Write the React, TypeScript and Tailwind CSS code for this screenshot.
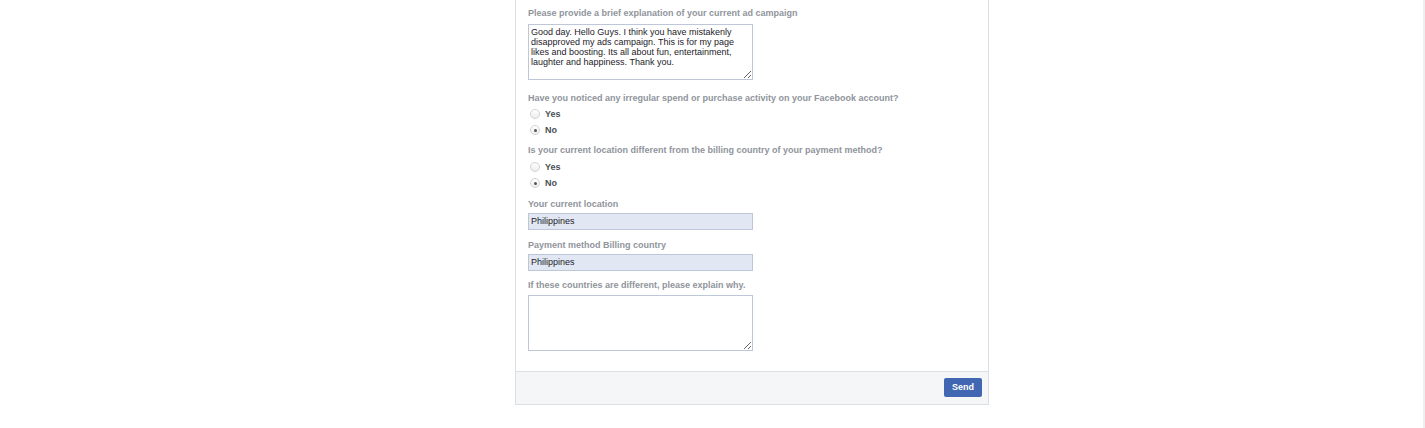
import React from 'react'

// Appeal form: ad campaign review questions
const font = { fontFamily: '"Liberation Sans", Arial, Helvetica, sans-serif' }

const campaignText =
  'Good day. Hello Guys. I think you have mistakenly\ndisapproved my ads campaign. This is for my page\nlikes and boosting. Its all about fun, entertainment,\nlaughter and happiness. Thank you.'

function Label({ children, className = '' }: { children: React.ReactNode; className?: string }) {
  return <div className={`text-[9px] leading-[11px] font-bold text-[#90949c] ${className}`}>{children}</div>
}

function Radio({ label, checked }: { label: string; checked?: boolean }) {
  return (
    <div className="flex items-center h-[16px] pl-[2px] gap-[5px]">
      <span className="flex items-center justify-center w-[10px] h-[10px] rounded-full border border-[#d3d3d3] bg-gradient-to-b from-white to-[#ededed]">
        {checked && <span className="w-[3px] h-[3px] rounded-full bg-[#555]" />}
      </span>
      <span className="text-[9px] leading-[11px] font-bold text-[#4b4f56]">{label}</span>
    </div>
  )
}

function TextBox({ value, className = '' }: { value: string; className?: string }) {
  return (
    <textarea
      readOnly
      defaultValue={value}
      className={`block w-[225px] h-[56px] border border-[#bdc7d8] bg-white px-[2px] pt-[2px] text-[9px] leading-[10px] text-[#1d2129] outline-none resize ${className}`}
      style={font}
    />
  )
}

function Field({ value, className = '' }: { value: string; className?: string }) {
  return (
    <div className={`w-[225px] h-[17px] border border-[#bdc7d8] bg-[#e2e7f4] px-[2px] flex items-center text-[9px] text-[#1d2129] ${className}`}>
      {value}
    </div>
  )
}

export default function App() {
  return (
    <div className="flex h-[428px] w-full bg-white" style={font}>
      <div className="flex-1">
        <div className="ml-[515px] w-[474px] border-x border-b border-[#dddfe2] bg-white">
          <div className="pl-[12px] pt-[8px] pb-[20px]">
            <Label>Please provide a brief explanation of your current ad campaign</Label>
            <TextBox value={campaignText} className="mt-[5px]" />

            <Label className="mt-[13px]">Have you noticed any irregular spend or purchase activity on your Facebook account?</Label>
            <div className="mt-[2px]">
              <Radio label="Yes" />
              <Radio label="No" checked />
            </div>

            <Label className="mt-[7px]">Is your current location different from the billing country of your payment method?</Label>
            <div className="mt-[3px]">
              <Radio label="Yes" />
              <Radio label="No" checked />
            </div>

            <Label className="mt-[8px]">Your current location</Label>
            <Field value="Philippines" className="mt-[3px]" />

            <Label className="mt-[10px]">Payment method Billing country</Label>
            <Field value="Philippines" className="mt-[3px]" />

            <Label className="mt-[9px]">If these countries are different, please explain why.</Label>
            <TextBox value="" className="mt-[4px]" />
          </div>
          <div className="flex justify-end border-t border-[#dddfe2] bg-[#f5f6f7] pt-[6px] pb-[7px] pr-[6px]">
            <button className="w-[38px] h-[19px] rounded-[2px] bg-[#4267b2] text-[9px] font-bold text-white">
              Send
            </button>
          </div>
        </div>
      </div>
      <div className="w-[2px] h-full bg-[#efefef]" />
    </div>
  )
}
